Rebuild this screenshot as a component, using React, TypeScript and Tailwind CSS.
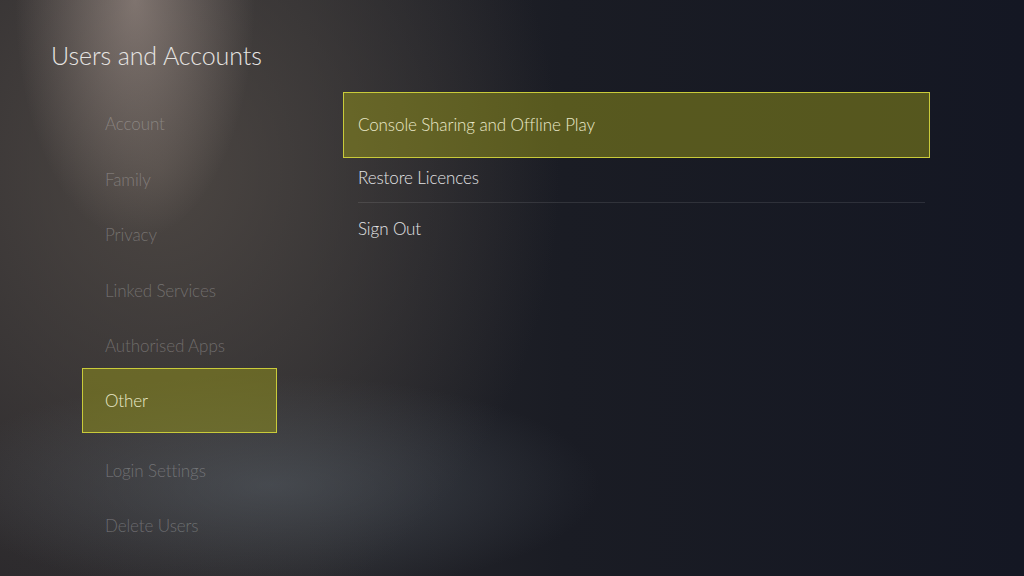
import React from 'react';

const leftItems = ['Account', 'Family', 'Privacy', 'Linked Services', 'Authorised Apps'];

const App: React.FC = () => {
  return (
    <div
      className="w-full h-[576px] overflow-hidden text-[17px] font-light tracking-[-0.1px] bg-[radial-gradient(ellipse_120px_240px_at_135px_0px,rgba(205,185,175,0.45),transparent),radial-gradient(ellipse_330px_110px_at_270px_485px,rgba(95,105,115,0.45),transparent),radial-gradient(ellipse_400px_470px_at_160px_170px,rgba(78,72,68,0.95),transparent),linear-gradient(90deg,#2b292c,#27272b_30%,#1a1c24_55%,#141723)]"
      style={{ fontFamily: 'Lato, "Noto Sans", sans-serif' }}
    >
      <div className="pl-[51px] pt-[40px] h-[30px] box-content leading-[30px] text-[25px] text-[#e6e4e2]">
        Users and Accounts
      </div>

      <div className="flex mt-[22px]">
        {/* left menu */}
        <div className="flex flex-col w-[195px] ml-[82px] pt-[4px]">
          {leftItems.map((label) => (
            <div key={label} className="h-[55.5px] flex items-center pl-[23px] text-white/25">
              {label}
            </div>
          ))}
          <div className="-mt-[6px] h-[65px] flex items-center pl-[22px] pt-[2px] border border-[#c9cb3a] bg-[rgba(150,150,25,0.5)] text-[#e9e8c8]">
            Other
          </div>
          <div className="mt-[10px] h-[55.5px] flex items-center pl-[23px] text-white/25">Login Settings</div>
          <div className="h-[55.5px] flex items-center pl-[23px] text-white/25">Delete Users</div>
        </div>

        {/* right list */}
        <div className="flex flex-col w-[587px] ml-[66px]">
          <div className="h-[66px] flex items-center pl-[14px] border border-[#c9cb3a] bg-[rgba(150,150,25,0.5)] text-[#e9e8c8]">
            Console Sharing and Offline Play
          </div>
          <div className="h-[45px] pt-[8px] leading-6 text-[#e2e2e4] border-b border-white/10 ml-[15px] mr-[5px]">
            Restore Licences
          </div>
          <div className="pt-[14px] pl-[15px] leading-6 text-[#e2e2e4]">Sign Out</div>
        </div>
      </div>
    </div>
  );
};

export default App;
